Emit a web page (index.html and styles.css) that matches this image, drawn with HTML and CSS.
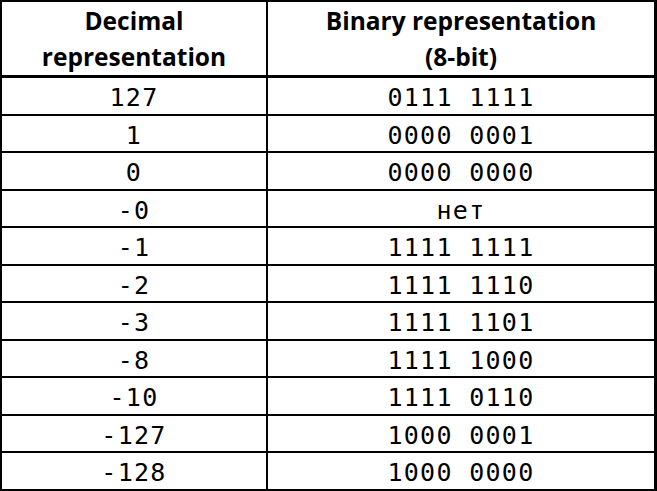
FILE: index.html
```html
<!DOCTYPE html>
<html lang="en">
<head>
<meta charset="utf-8">
<title>Two's complement</title>
<link rel="stylesheet" href="styles.css">
</head>
<body>
<table class="tbl">
  <colgroup><col class="c1"><col class="c2"></colgroup>
  <thead>
    <tr class="head">
      <th>Decimal<br>representation</th>
      <th>Binary representation<br>(8-bit)</th>
    </tr>
  </thead>
  <tbody>
    <tr><td>127</td><td>0111 1111</td></tr>
    <tr><td>1</td><td>0000 0001</td></tr>
    <tr><td>0</td><td>0000 0000</td></tr>
    <tr><td>-0</td><td>нет</td></tr>
    <tr><td>-1</td><td>1111 1111</td></tr>
    <tr><td>-2</td><td>1111 1110</td></tr>
    <tr><td>-3</td><td>1111 1101</td></tr>
    <tr><td>-8</td><td>1111 1000</td></tr>
    <tr><td>-10</td><td>1111 0110</td></tr>
    <tr><td>-127</td><td>1000 0001</td></tr>
    <tr><td>-128</td><td>1000 0000</td></tr>
  </tbody>
</table>
</body>
</html>
```
FILE: styles.css
```css
html, body {
  margin: 0;
  padding: 0;
  background: #fff;
}
.tbl {
  border-collapse: separate;
  border-spacing: 0;
  table-layout: fixed;
  width: 657px;
  border-top: 2px solid #000;
  border-left: 2px solid #000;
  color: #000;
}
.c1 { width: 266px; }
.c2 { width: 389px; }
.tbl th,
.tbl td {
  padding: 0;
  text-align: center;
  vertical-align: middle;
  border-right: 2px solid #000;
  border-bottom: 2px solid #000;
}
.tbl th:last-child,
.tbl td:last-child {
  border-right-width: 3px;
}
.tbl th {
  height: 76px;
  box-sizing: border-box;
  border-bottom-width: 3px;
  font-family: "Open Sans", "Noto Sans", sans-serif;
  font-weight: 700;
  font-size: 24.5px;
  line-height: 36px;
  padding-top: 1px;
}
.tbl td {
  height: 37.5px;
  box-sizing: border-box;
  font-family: "DejaVu Sans Mono", "Liberation Mono", monospace;
  font-size: 25px;
  letter-spacing: 1.3px;
  line-height: 25px;
  padding-top: 4px;
}
```
